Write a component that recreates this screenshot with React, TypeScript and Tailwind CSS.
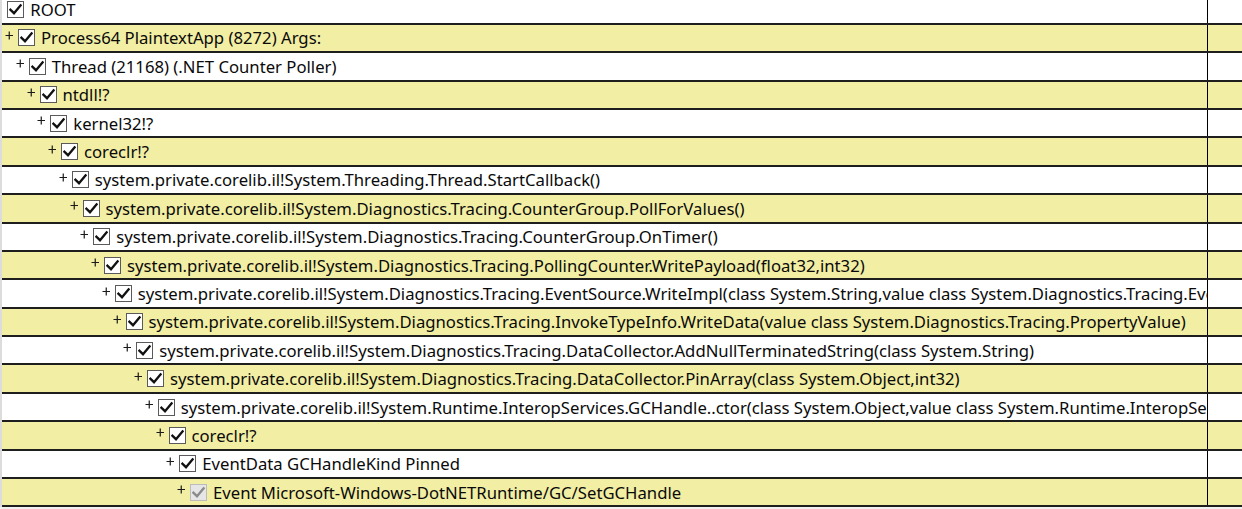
const rows: { label: string; level: number; disabled?: boolean }[] = [
  { label: 'ROOT', level: -1 },
  { label: 'Process64 PlaintextApp (8272) Args:', level: 0 },
  { label: 'Thread (21168) (.NET Counter Poller)', level: 1 },
  { label: 'ntdll!?', level: 2 },
  { label: 'kernel32!?', level: 3 },
  { label: 'coreclr!?', level: 4 },
  { label: 'system.private.corelib.il!System.Threading.Thread.StartCallback()', level: 5 },
  { label: 'system.private.corelib.il!System.Diagnostics.Tracing.CounterGroup.PollForValues()', level: 6 },
  { label: 'system.private.corelib.il!System.Diagnostics.Tracing.CounterGroup.OnTimer()', level: 7 },
  { label: 'system.private.corelib.il!System.Diagnostics.Tracing.PollingCounter.WritePayload(float32,int32)', level: 8 },
  {
    label:
      'system.private.corelib.il!System.Diagnostics.Tracing.EventSource.WriteImpl(class System.String,value class System.Diagnostics.Tracing.EventSourceOptions&,class System.Object,value class System.Guid*)',
    level: 9,
  },
  {
    label:
      'system.private.corelib.il!System.Diagnostics.Tracing.InvokeTypeInfo.WriteData(value class System.Diagnostics.Tracing.PropertyValue)',
    level: 10,
  },
  {
    label: 'system.private.corelib.il!System.Diagnostics.Tracing.DataCollector.AddNullTerminatedString(class System.String)',
    level: 11,
  },
  {
    label: 'system.private.corelib.il!System.Diagnostics.Tracing.DataCollector.PinArray(class System.Object,int32)',
    level: 12,
  },
  {
    label:
      'system.private.corelib.il!System.Runtime.InteropServices.GCHandle..ctor(class System.Object,value class System.Runtime.InteropServices.GCHandleType)',
    level: 13,
  },
  { label: 'coreclr!?', level: 14 },
  { label: 'EventData GCHandleKind Pinned', level: 15 },
  { label: 'Event Microsoft-Windows-DotNETRuntime/GC/SetGCHandle', level: 16, disabled: true },
]

function CheckBox({ disabled }: { disabled?: boolean }) {
  return (
    <span
      className={
        disabled
          ? 'flex h-[17px] w-[17px] shrink-0 items-center justify-center border border-[#bcbcbc] bg-[#e6e6e6]'
          : 'flex h-[17px] w-[17px] shrink-0 items-center justify-center border border-[#5a5a5a] bg-white'
      }
    >
      <svg width="13" height="13" viewBox="0 0 13 13">
        <path
          d="M1.5 6.8 L5 10.2 L11.6 2.4"
          fill="none"
          stroke={disabled ? '#8a8a8a' : '#111'}
          strokeWidth="2.4"
          strokeLinecap="square"
        />
      </svg>
    </span>
  )
}

function Plus({ hidden }: { hidden?: boolean }) {
  return (
    <span className={hidden ? 'invisible mb-[5px] flex h-[9px] w-[13px] shrink-0' : 'mb-[5px] flex h-[9px] w-[13px] shrink-0'}>
      <svg width="9" height="9" viewBox="0 0 9 9">
        <path d="M0.5 4.5 H8 M4.25 0.5 V8.5" stroke="#1a1a1a" strokeWidth="1.2" />
      </svg>
    </span>
  )
}

export default function App() {
  return (
    <div
      className="h-[509px] w-[1242px] overflow-hidden bg-[#f0f0f0] text-[16.7px] text-[#0a0a0a]"
      style={{ fontFamily: '"Segoe UI", "Noto Sans", sans-serif' }}
    >
      <div className="mt-[-3.6px] border-l-2 border-[#dcdcdc]">
        {rows.map((row, i) => (
          <div
            key={i}
            className={
              i % 2 === 1
                ? 'flex h-[28.4px] border-b-2 border-[#1e1e1e] bg-[#f2eea4]'
                : 'flex h-[28.4px] border-b-2 border-[#1e1e1e] bg-white'
            }
          >
            <div className="flex w-[1206px] shrink-0 items-center overflow-hidden whitespace-nowrap border-r border-black">
              <div className="flex shrink-0 items-center" style={{ marginLeft: 3 + row.level * 10.75 }}>
                <Plus hidden={row.level < 0} />
                <CheckBox disabled={row.disabled} />
                <span className="ml-[6px]">{row.label}</span>
              </div>
            </div>
            <div className="flex-1" />
          </div>
        ))}
      </div>
    </div>
  )
}
